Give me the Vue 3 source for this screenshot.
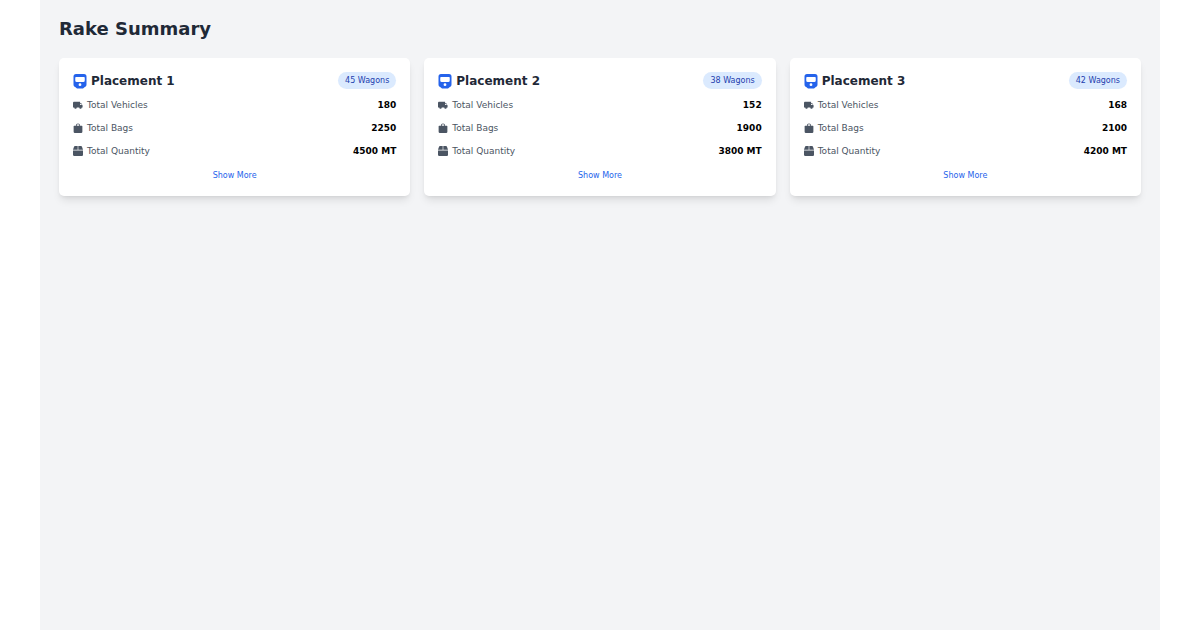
<script setup>
import { ref } from 'vue'

const icons = {
  train: {
    box: '0 0 28 30',
    d: 'M6 0h16a5 5 0 0 1 5 5v16c0 3-1.500 4.500-4 5.500L20 29H8l-3-2.500C2.500 25.500 1 24 1 21V5a5 5 0 0 1 5-5zM6 6A1.500 1.500 0 0 0 4.500 7.500V13a3 3 0 0 0 3 3h13a3 3 0 0 0 3-3V7.500A1.500 1.500 0 0 0 22 6zM14 18.500a2.800 2.800 0 1 0 0 5.600 2.800 2.800 0 1 0 0-5.600z',
  },
  truck: {
    box: '0 0 24 24',
    d: 'M20 8h-3V4H3c-1.660 0-3 1.340-3 3v11h3c0 1.660 1.340 3 3 3s3-1.340 3-3h6c0 1.660 1.340 3 3 3s3-1.340 3-3h2v-5l-3-5zm-.5 1.500l1.960 2.500H17V9.500h2.500z',
  },
  bag: {
    box: '0 0 24 24',
    d: 'M7 6.500V6a5 5 0 0 1 10 0v.5h4a1.500 1.500 0 0 1 1.500 1.500v13a3 3 0 0 1-3 3h-15a3 3 0 0 1-3-3V8A1.500 1.500 0 0 1 3 6.500zM9 6.500h6V6a3 3 0 0 0-6 0z',
  },
  box: {
    box: '0 0 512 512',
    d: 'M509.5 184.6L458.9 32.8C452.4 13.2 434.1 0 413.4 0H272v192h238.7c-.4-2.5-.4-5-1.2-7.4zM240 0H98.6c-20.7 0-39 13.2-45.5 32.8L2.5 184.6c-.8 2.4-.8 4.9-1.2 7.4H240V0zM0 224v240c0 26.5 21.5 48 48 48h416c26.5 0 48-21.5 48-48V224H0z',
  },
}

const placements = ref([
  { id: 1, wagons: 45, vehicles: 180, bags: 2250, quantity: 4500 },
  { id: 2, wagons: 38, vehicles: 152, bags: 1900, quantity: 3800 },
  { id: 3, wagons: 42, vehicles: 168, bags: 2100, quantity: 4200 },
])

const rows = (p) => [
  { icon: icons.truck, label: 'Total Vehicles', value: p.vehicles },
  { icon: icons.bag, label: 'Total Bags', value: p.bags },
  { icon: icons.box, label: 'Total Quantity', value: `${p.quantity} MT` },
]
</script>

<template>
  <main class="page">
    <h1 class="title">Rake Summary</h1>
    <div class="grid">
      <section v-for="p in placements" :key="p.id" class="card">
        <header class="head">
          <h2 class="name">
            <svg class="train" :viewBox="icons.train.box" aria-hidden="true"><path fill-rule="evenodd" :d="icons.train.d" /></svg>
            <span>Placement {{ p.id }}</span>
          </h2>
          <span class="pill">{{ p.wagons }} Wagons</span>
        </header>
        <dl class="stats">
          <div v-for="r in rows(p)" :key="r.label" class="row">
            <dt class="label">
              <svg class="icon" :viewBox="r.icon.box" aria-hidden="true"><path fill-rule="evenodd" :d="r.icon.d" /></svg>
              <span>{{ r.label }}</span>
            </dt>
            <dd class="value">{{ r.value }}</dd>
          </div>
        </dl>
        <button type="button" class="more">Show More</button>
      </section>
    </div>
  </main>
</template>

<style>
body {
  background: #fff;
}
</style>

<style scoped>
.page {
  box-sizing: border-box;
  max-width: 1120px;
  min-height: 100vh;
  margin: 0 auto;
  padding: 19px;
  background: #f3f4f6;
  font-family: "DejaVu Sans", sans-serif;
  font-size: 9px;
  line-height: 14px;
  color: #000;
}
.title {
  margin: 0 0 19px;
  font-size: 18px;
  line-height: 20px;
  font-weight: 700;
  color: #1f2937;
}
.grid {
  display: grid;
  grid-template-columns: repeat(3, minmax(0, 1fr));
  gap: 14px;
}
.card {
  display: flex;
  flex-direction: column;
  gap: 8px;
  padding: 14px 14px 12px;
  background: #fff;
  border-radius: 5px;
  box-shadow: 0 6px 9px -2px rgba(0, 0, 0, 0.1), 0 2px 4px -2px rgba(0, 0, 0, 0.1);
}
.head,
.row {
  display: flex;
  align-items: center;
  justify-content: space-between;
}
.head {
  align-items: flex-start;
}
.name {
  display: flex;
  align-items: center;
  gap: 4px;
  margin: 0;
  font-size: 12px;
  line-height: 18px;
  font-weight: 700;
  color: #1f2937;
}
.train {
  width: 14px;
  height: 15px;
  fill: #2563eb;
}
.pill {
  padding: 2px 7px;
  border-radius: 9px;
  background: #dbeafe;
  color: #1e40af;
  font-size: 8px;
  line-height: 13px;
}
.stats {
  display: flex;
  flex-direction: column;
  gap: 9px;
  margin: 0;
}
.label {
  display: flex;
  align-items: center;
  gap: 4px;
  color: #4b5563;
}
.icon {
  width: 10px;
  height: 10px;
  fill: currentColor;
}
.value {
  margin: 0;
  font-weight: 700;
}
.more {
  align-self: center;
  padding: 2px 0 0;
  border: 0;
  background: none;
  color: #2563eb;
  font-family: inherit;
  font-size: 8px;
  line-height: 16px;
  cursor: pointer;
}
.more:hover {
  color: #1e40af;
}
</style>
